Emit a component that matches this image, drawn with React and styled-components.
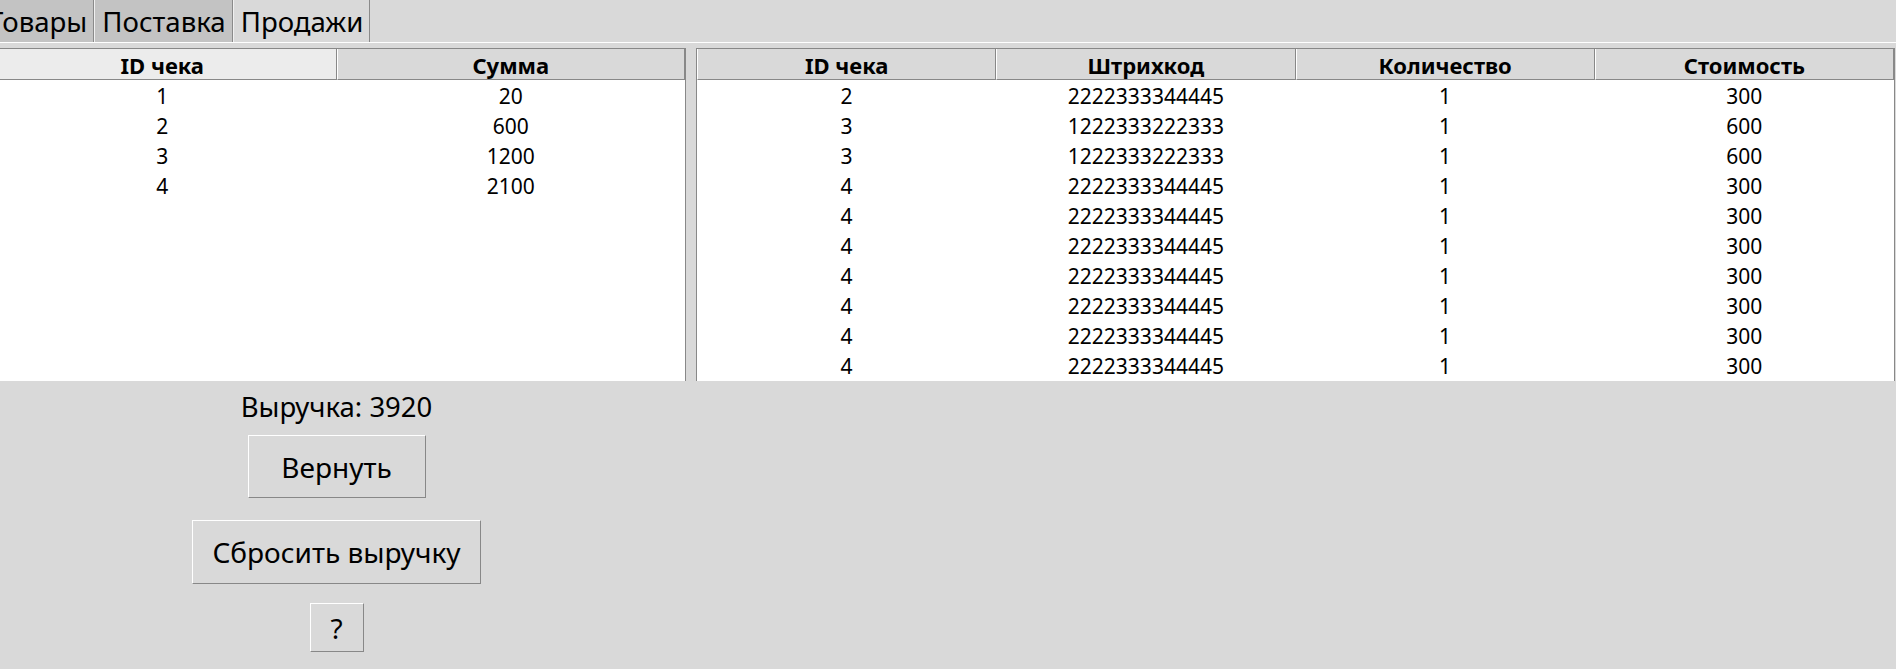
import React from "react";
import styled, { createGlobalStyle } from "styled-components";

const GlobalStyle = createGlobalStyle`
  html, body {
    margin: 0;
    padding: 0;
    background: #d9d9d9;
    overflow: hidden;
  }
  body {
    font-family: "Noto Sans", "DejaVu Sans", sans-serif;
    color: #000;
  }
`;

const checks = [
  { id: 1, sum: 20 },
  { id: 2, sum: 600 },
  { id: 3, sum: 1200 },
  { id: 4, sum: 2100 },
];

const items = [
  [2, "2222333344445", 1, 300],
  [3, "1222333222333", 1, 600],
  [3, "1222333222333", 1, 600],
  [4, "2222333344445", 1, 300],
  [4, "2222333344445", 1, 300],
  [4, "2222333344445", 1, 300],
  [4, "2222333344445", 1, 300],
  [4, "2222333344445", 1, 300],
  [4, "2222333344445", 1, 300],
  [4, "2222333344445", 1, 300],
];

const App = () => {
  return (
    <Window>
      <GlobalStyle />
      <TabBar>
        <Tab>Товары</Tab>
        <Tab>Поставка</Tab>
        <Tab $active>Продажи</Tab>
      </TabBar>
      <Pane>
        <Tables>
          <LeftColumn>
            <Table $cols={2}>
              <HeadCell $hover>ID чека</HeadCell>
              <HeadCell>Сумма</HeadCell>
              <Body $cols={2}>
                {checks.map((c) => (
                  <React.Fragment key={c.id}>
                    <Cell>{c.id}</Cell>
                    <Cell>{c.sum}</Cell>
                  </React.Fragment>
                ))}
              </Body>
            </Table>
            <Controls>
              <Revenue>Выручка: 3920</Revenue>
              <Button $w={178} $h={63}>Вернуть</Button>
              <Button $w={289} $h={64} $mt={22}>
                Сбросить выручку
              </Button>
              <Button $w={54} $h={49} $mt={19}>
                ?
              </Button>
            </Controls>
          </LeftColumn>
          <Table $cols={4} $grow>
            <HeadCell>ID чека</HeadCell>
            <HeadCell>Штрихкод</HeadCell>
            <HeadCell>Количество</HeadCell>
            <HeadCell>Стоимость</HeadCell>
            <Body $cols={4}>
              {items.map((row, i) => (
                <React.Fragment key={i}>
                  {row.map((v, j) => (
                    <Cell key={j}>{v}</Cell>
                  ))}
                </React.Fragment>
              ))}
            </Body>
          </Table>
        </Tables>
      </Pane>
    </Window>
  );
};

export default App;

const Window = styled.div`
  width: calc(100vw + 13px);
  margin-left: -13px;
  height: 100vh;
  display: flex;
  flex-direction: column;
`;

const TabBar = styled.div`
  display: flex;
  align-items: flex-end;
  height: 42px;
  margin-left: -7px;
`;

const Tab = styled.div`
  height: 42px;
  box-sizing: border-box;
  padding: 0 6px 0 7px;
  font-size: 27.6px;
  line-height: 42px;
  background: ${(p) => (p.$active ? "#d9d9d9" : "#c3c3c3")};
  border-left: 1px solid #f0f0f0;
  border-right: 1px solid #8a8a8a;
  white-space: nowrap;
`;

const Pane = styled.div`
  flex: 1;
  border-top: 1px solid #fff;
  padding-top: 5px;
`;

const Tables = styled.div`
  display: flex;
  align-items: flex-start;
  gap: 10px;
  padding-right: 1px;
`;

const LeftColumn = styled.div`
  width: 699px;
  display: flex;
  flex-direction: column;
`;

const Table = styled.div`
  display: grid;
  grid-template-columns: repeat(${(p) => p.$cols}, 1fr);
  ${(p) => (p.$grow ? "flex: 1;" : "")}
  border: 1px solid #888;
  border-bottom: none;
  background: #fff;
`;

const HeadCell = styled.div`
  height: 31px;
  box-sizing: border-box;
  display: flex;
  align-items: center;
  justify-content: center;
  font-size: 22px;
  font-weight: 700;
  background: ${(p) => (p.$hover ? "#ececec" : "#d9d9d9")};
  border-left: 1px solid #fff;
  border-right: 1px solid #888;
  border-bottom: 1px solid #888;
  padding-top: 1px;
`;

const Body = styled.div`
  grid-column: 1 / -1;
  display: grid;
  grid-template-columns: repeat(${(p) => p.$cols}, 1fr);
  grid-auto-rows: 30px;
  align-content: start;
  height: 301px;
  padding-top: 1px;
  box-sizing: border-box;
`;

const Cell = styled.div`
  display: flex;
  align-items: center;
  justify-content: center;
  font-size: 21px;
`;

const Controls = styled.div`
  display: flex;
  flex-direction: column;
  align-items: center;
`;

const Revenue = styled.div`
  font-size: 27.5px;
  line-height: 35px;
  margin-top: 8px;
  margin-bottom: 11px;
`;

const Button = styled.div`
  width: ${(p) => p.$w}px;
  height: ${(p) => p.$h}px;
  margin-top: ${(p) => p.$mt || 0}px;
  box-sizing: border-box;
  display: flex;
  align-items: center;
  justify-content: center;
  font-size: 28px;
  background: #d9d9d9;
  border-top: 1px solid #fff;
  border-left: 1px solid #fff;
  border-right: 1px solid #888;
  border-bottom: 1px solid #888;
  cursor: pointer;
`;
